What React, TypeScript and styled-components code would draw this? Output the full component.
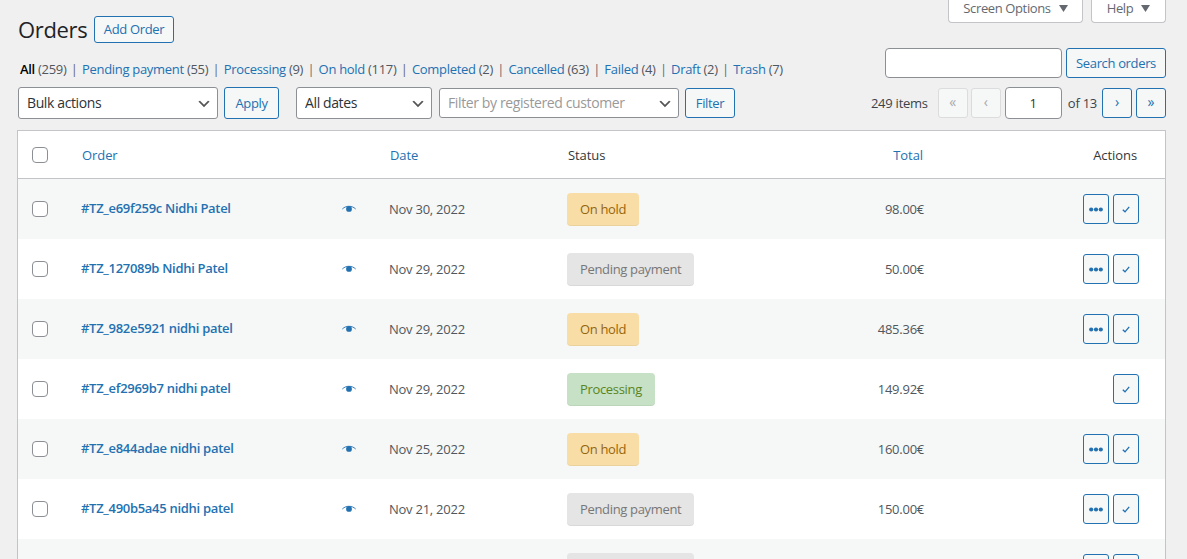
import React from "react";
import styled, { createGlobalStyle } from "styled-components";

const Global = createGlobalStyle`
  html, body { margin: 0; padding: 0; height: 100%; overflow: hidden; background: #f0f0f1; }
  body { font-family: "Open Sans", "Noto Sans", sans-serif; font-size: 13px; line-height: 1.4; color: #3c434a; letter-spacing: -0.25px; }
  * { box-sizing: border-box; }
`;

const chevron = `url("data:image/svg+xml;charset=US-ASCII,%3Csvg%20width%3D%2220%22%20height%3D%2220%22%20xmlns%3D%22http%3A%2F%2Fwww.w3.org%2F2000%2Fsvg%22%3E%3Cpath%20d%3D%22M5%206l5%205%205-5%202%201-7%207-7-7%202-1z%22%20fill%3D%22%23555%22%2F%3E%3C%2Fsvg%3E")`;

const Page = styled.div`
  height: 559px;
  overflow: hidden;
  padding: 0 21px 0 18px;
`;
const Top = styled.header`
  display: flex;
  justify-content: space-between;
  height: 78px;
`;
const Left = styled.div`
  padding-top: 16px;
  display: flex;
  flex-direction: column;
`;
const TitleRow = styled.div`
  display: flex;
  align-items: center;
  gap: 8px;
  height: 27px;
`;
const Title = styled.h1`
  margin: 0;
  width: 68px;
  font-size: 22px;
  font-weight: 400;
  line-height: 27px;
  color: #1d2327;
  letter-spacing: -0.35px;
`;
const Outline = styled.button<{ $w?: number; $h?: number }>`
  height: ${(p) => p.$h ?? 30}px;
  width: ${(p) => (p.$w ? `${p.$w}px` : "auto")};
  padding: 0;
  border: 1px solid #2271b1;
  border-radius: 3px;
  background: #f6f7f7;
  color: #2271b1;
  font: inherit;
  letter-spacing: -0.35px;
  line-height: 1;
  flex: none;
  display: inline-flex;
  align-items: center;
  justify-content: center;
`;
const Filters = styled.ul`
  display: flex;
  margin: 17px 0 0 2px;
  padding: 0;
  list-style: none;
  line-height: 18px;
  white-space: pre;
  letter-spacing: -0.3px;
`;
const FilterItem = styled.li<{ $first?: boolean }>`
  color: #50575e;
  &::before {
    content: ${(p) => (p.$first ? '""' : '"|"')};
    color: #646970;
    margin: ${(p) => (p.$first ? "0" : "0 4.3px")};
  }
`;
const FilterLink = styled.a<{ $current?: boolean }>`
  color: ${(p) => (p.$current ? "#000" : "#2271b1")};
  font-weight: ${(p) => (p.$current ? 600 : 400)};
`;
const Right = styled.div`
  display: flex;
  flex-direction: column;
  align-items: flex-end;
`;
const Tabs = styled.div`
  display: flex;
  gap: 8px;
  height: 23px;
`;
const Tab = styled.div<{ $w: number }>`
  width: ${(p) => p.$w}px;
  height: 23px;
  background: #fff;
  border: 1px solid #c3c4c7;
  border-top: none;
  border-radius: 0 0 4px 4px;
  color: #646970;
  display: flex;
  align-items: flex-start;
  justify-content: center;
  gap: 8px;
  line-height: 16px;
  letter-spacing: -0.38px;
`;
const Arrow = styled.svg`
  width: 9px;
  height: 7px;
  margin-top: 5px;
  fill: #646970;
`;
const SearchRow = styled.div`
  display: flex;
  gap: 4px;
  margin-top: 25px;
`;
const TextInput = styled.input<{ $w: number; $h?: number; $center?: boolean; $ml?: number }>`
  width: ${(p) => p.$w}px;
  height: ${(p) => p.$h ?? 30}px;
  margin-left: ${(p) => p.$ml ?? 0}px;
  border: 1px solid #8c8f94;
  border-radius: 4px;
  background: #fff;
  color: #2c3338;
  font: inherit;
  letter-spacing: 0;
  padding: 0 8px;
  text-align: ${(p) => (p.$center ? "center" : "left")};
  flex: none;
`;
const Toolbar = styled.div`
  display: flex;
  align-items: center;
  height: 32px;
  margin-top: 9px;
`;
const Select = styled.select<{ $w: number; $h?: number; $muted?: boolean; $gap?: number }>`
  appearance: none;
  width: ${(p) => p.$w}px;
  height: ${(p) => p.$h ?? 32}px;
  margin-left: ${(p) => p.$gap ?? 0}px;
  border: 1px solid #8c8f94;
  border-radius: 3px;
  padding: 0 24px 0 8px;
  background: #fff ${chevron} no-repeat right 5px top 55%;
  background-size: 16px 16px;
  color: ${(p) => (p.$muted ? "#999" : "#2c3338")};
  font: inherit;
  font-size: 14px;
  letter-spacing: -0.38px;
  line-height: 2;
  flex: none;
`;
const ApplyGap = styled.span<{ $w: number }>`
  display: block;
  flex: none;
  width: ${(p) => p.$w}px;
`;
const Pager = styled.div`
  margin-left: auto;
  display: flex;
  align-items: center;
`;
const PageText = styled.span<{ $m: string }>`
  color: #3c434a;
  margin: ${(p) => p.$m};
  white-space: nowrap;
`;
const PageButton = styled.button<{ $off?: boolean; $ml?: number }>`
  width: 30px;
  height: 30px;
  padding: 0 0 3px;
  margin-left: ${(p) => p.$ml ?? 0}px;
  border: 1px solid ${(p) => (p.$off ? "#dcdcde" : "#2271b1")};
  border-radius: 3px;
  background: #f6f7f7;
  color: ${(p) => (p.$off ? "#a7aaad" : "#2271b1")};
  font: inherit;
  font-size: 14px;
  line-height: 1;
  flex: none;
`;
const Table = styled.section`
  margin: 11px 0 0 -1px;
  border: 1px solid #c3c4c7;
  background: #fff;
`;
const cols = "64px 260px 47px 178px 133px 224px 1fr";
const HeadRow = styled.div`
  display: grid;
  grid-template-columns: ${cols};
  align-items: center;
  height: 48px;
  border-bottom: 1px solid #c3c4c7;
  background: #fff;
  letter-spacing: -0.08px;
`;
const Row = styled.div<{ $alt: boolean }>`
  display: grid;
  grid-template-columns: ${cols};
  align-items: center;
  height: 60px;
  background: ${(p) => (p.$alt ? "#f6f7f7" : "#fff")};
`;
const Check = styled.input.attrs({ type: "checkbox" })`
  appearance: none;
  width: 16px;
  height: 16px;
  margin: 0 0 0 14px;
  border: 1px solid #8c8f94;
  border-radius: 4px;
  background: #fff;
  display: block;
`;
const ColLink = styled.a<{ $end?: boolean; $pad?: number; $ml?: number }>`
  color: #2271b1;
  text-align: ${(p) => (p.$end ? "right" : "left")};
  padding: 1px ${(p) => p.$pad ?? 0}px 0 0;
  margin-left: ${(p) => p.$ml ?? 0}px;
`;
const ColText = styled.span<{ $end?: boolean; $pad?: number; $ml?: number }>`
  color: #32373c;
  text-align: ${(p) => (p.$end ? "right" : "left")};
  padding: 1px ${(p) => p.$pad ?? 0}px 0 0;
  margin-left: ${(p) => p.$ml ?? 0}px;
`;
const OrderName = styled.a`
  color: #2271b1;
  font-weight: 600;
  margin: -2px 0 0 -1px;
  letter-spacing: -0.3px;
  white-space: nowrap;
`;
const EyeIcon = styled.svg`
  display: block;
  width: 14px;
  height: 9px;
  margin-top: -1px;
  color: #2271b1;
`;
const DateText = styled.span`
  color: #50575e;
`;
const Badge = styled.mark<{ $kind: Status; $blank?: boolean }>`
  justify-self: start;
  display: inline-flex;
  align-items: center;
  height: 33px;
  min-width: ${(p) => (p.$blank ? "127px" : "0")};
  padding: 0 13px;
  border-radius: 4px;
  box-shadow: inset 0 -1px 0 rgba(0, 0, 0, 0.05);
  white-space: nowrap;
  letter-spacing: -0.33px;
  background: ${(p) => palette[p.$kind].bg};
  color: ${(p) => palette[p.$kind].fg};
`;
const Total = styled.span`
  color: #50575e;
  text-align: right;
`;
const Actions = styled.div`
  display: flex;
  justify-content: flex-end;
  gap: 4px;
  padding-right: 26px;
`;
const DotsIcon = styled.svg`
  display: block;
  width: 14px;
  height: 5px;
  fill: currentColor;
`;
const TickIcon = styled.svg`
  display: block;
  width: 8px;
  height: 7px;
  fill: none;
  stroke: currentColor;
`;

type Status = "On hold" | "Pending payment" | "Processing";
const palette: Record<Status, { bg: string; fg: string }> = {
  "On hold": { bg: "#f8dda7", fg: "#94660c" },
  "Pending payment": { bg: "#e5e5e5", fg: "#777777" },
  Processing: { bg: "#c6e1c6", fg: "#5b841b" },
};

const filters = [
  ["All", "(259)"],
  ["Pending payment", "(55)"],
  ["Processing", "(9)"],
  ["On hold", "(117)"],
  ["Completed", "(2)"],
  ["Cancelled", "(63)"],
  ["Failed", "(4)"],
  ["Draft", "(2)"],
  ["Trash", "(7)"],
];

const orders: { name: string; date: string; status: Status; total: string; more: boolean }[] = [
  { name: "#TZ_e69f259c Nidhi Patel", date: "Nov 30, 2022", status: "On hold", total: "98.00€", more: true },
  { name: "#TZ_127089b Nidhi Patel", date: "Nov 29, 2022", status: "Pending payment", total: "50.00€", more: true },
  { name: "#TZ_982e5921 nidhi patel", date: "Nov 29, 2022", status: "On hold", total: "485.36€", more: true },
  { name: "#TZ_ef2969b7 nidhi patel", date: "Nov 29, 2022", status: "Processing", total: "149.92€", more: false },
  { name: "#TZ_e844adae nidhi patel", date: "Nov 25, 2022", status: "On hold", total: "160.00€", more: true },
  { name: "#TZ_490b5a45 nidhi patel", date: "Nov 21, 2022", status: "Pending payment", total: "150.00€", more: true },
  { name: "", date: "", status: "Pending payment", total: "", more: true },
];

const Eye = () => (
  <EyeIcon viewBox="0 0 14 9" aria-hidden="true">
    <path d="M0.3 5C2.4 3 4.6 2.3 7 2.3s4.6 0.7 6.7 2.7" fill="none" stroke="currentColor" strokeWidth="0.9" />
    <circle cx="7" cy="4.9" r="2.9" fill="currentColor" />
  </EyeIcon>
);

const Dots = () => (
  <DotsIcon viewBox="0 0 14 5" aria-hidden="true">
    <circle cx="2.2" cy="2.5" r="2.1" />
    <circle cx="7" cy="2.5" r="2.1" />
    <circle cx="11.8" cy="2.5" r="2.1" />
  </DotsIcon>
);

const Tick = () => (
  <TickIcon viewBox="0 0 8 7" aria-hidden="true">
    <path d="M0.8 3.8 3 5.8 7.2 0.8" strokeWidth="1.3" />
  </TickIcon>
);

export default function App() {
  return (
    <Page>
      <Global />
      <Top>
        <Left>
          <TitleRow>
            <Title>Orders</Title>
            <Outline $w={80} $h={27}>Add Order</Outline>
          </TitleRow>
          <Filters>
            {filters.map(([label, count], i) => (
              <FilterItem key={label} $first={i === 0}>
                <FilterLink $current={i === 0}>{label}</FilterLink> {count}
              </FilterItem>
            ))}
          </Filters>
        </Left>
        <Right>
          <Tabs>
            <Tab $w={135}>
              Screen Options
              <Arrow viewBox="0 0 9 7"><polygon points="0,0 9,0 4.5,7" /></Arrow>
            </Tab>
            <Tab $w={75}>
              Help
              <Arrow viewBox="0 0 9 7"><polygon points="0,0 9,0 4.5,7" /></Arrow>
            </Tab>
          </Tabs>
          <SearchRow>
            <TextInput $w={177} />
            <Outline $w={100}>Search orders</Outline>
          </SearchRow>
        </Right>
      </Top>
      <Toolbar>
        <Select $w={200}><option>Bulk actions</option></Select>
        <ApplyGap $w={6} />
        <Outline $w={55} $h={32}>Apply</Outline>
        <Select $w={136} $gap={17}><option>All dates</option></Select>
        <Select $w={240} $h={30} $gap={7} $muted><option>Filter by registered customer</option></Select>
        <ApplyGap $w={6} />
        <Outline $w={50}>Filter</Outline>
        <Pager>
          <PageText $m="0 10px 0 0">249 items</PageText>
          <PageButton $off>«</PageButton>
          <PageButton $off $ml={3}>‹</PageButton>
          <TextInput $w={57} $h={32} $center $ml={4} value="1" readOnly />
          <PageText $m="0 5px 0 6px">of 13</PageText>
          <PageButton>›</PageButton>
          <PageButton $ml={4}>»</PageButton>
        </Pager>
      </Toolbar>
      <Table>
        <HeadRow>
          <Check />
          <ColLink>Order</ColLink>
          <span />
          <ColLink $ml={1}>Date</ColLink>
          <ColText $ml={1}>Status</ColText>
          <ColLink $end $pad={1}>Total</ColLink>
          <ColText $end $pad={28}>Actions</ColText>
        </HeadRow>
        {orders.map((o, i) => (
          <Row key={i} $alt={i % 2 === 0}>
            <Check />
            <OrderName>{o.name}</OrderName>
            <Eye />
            <DateText>{o.date}</DateText>
            <Badge $kind={o.status} $blank={!o.name}>{o.name ? o.status : null}</Badge>
            <Total>{o.total}</Total>
            <Actions>
              {o.more && <Outline $w={26}><Dots /></Outline>}
              <Outline $w={26}><Tick /></Outline>
            </Actions>
          </Row>
        ))}
      </Table>
    </Page>
  );
}
